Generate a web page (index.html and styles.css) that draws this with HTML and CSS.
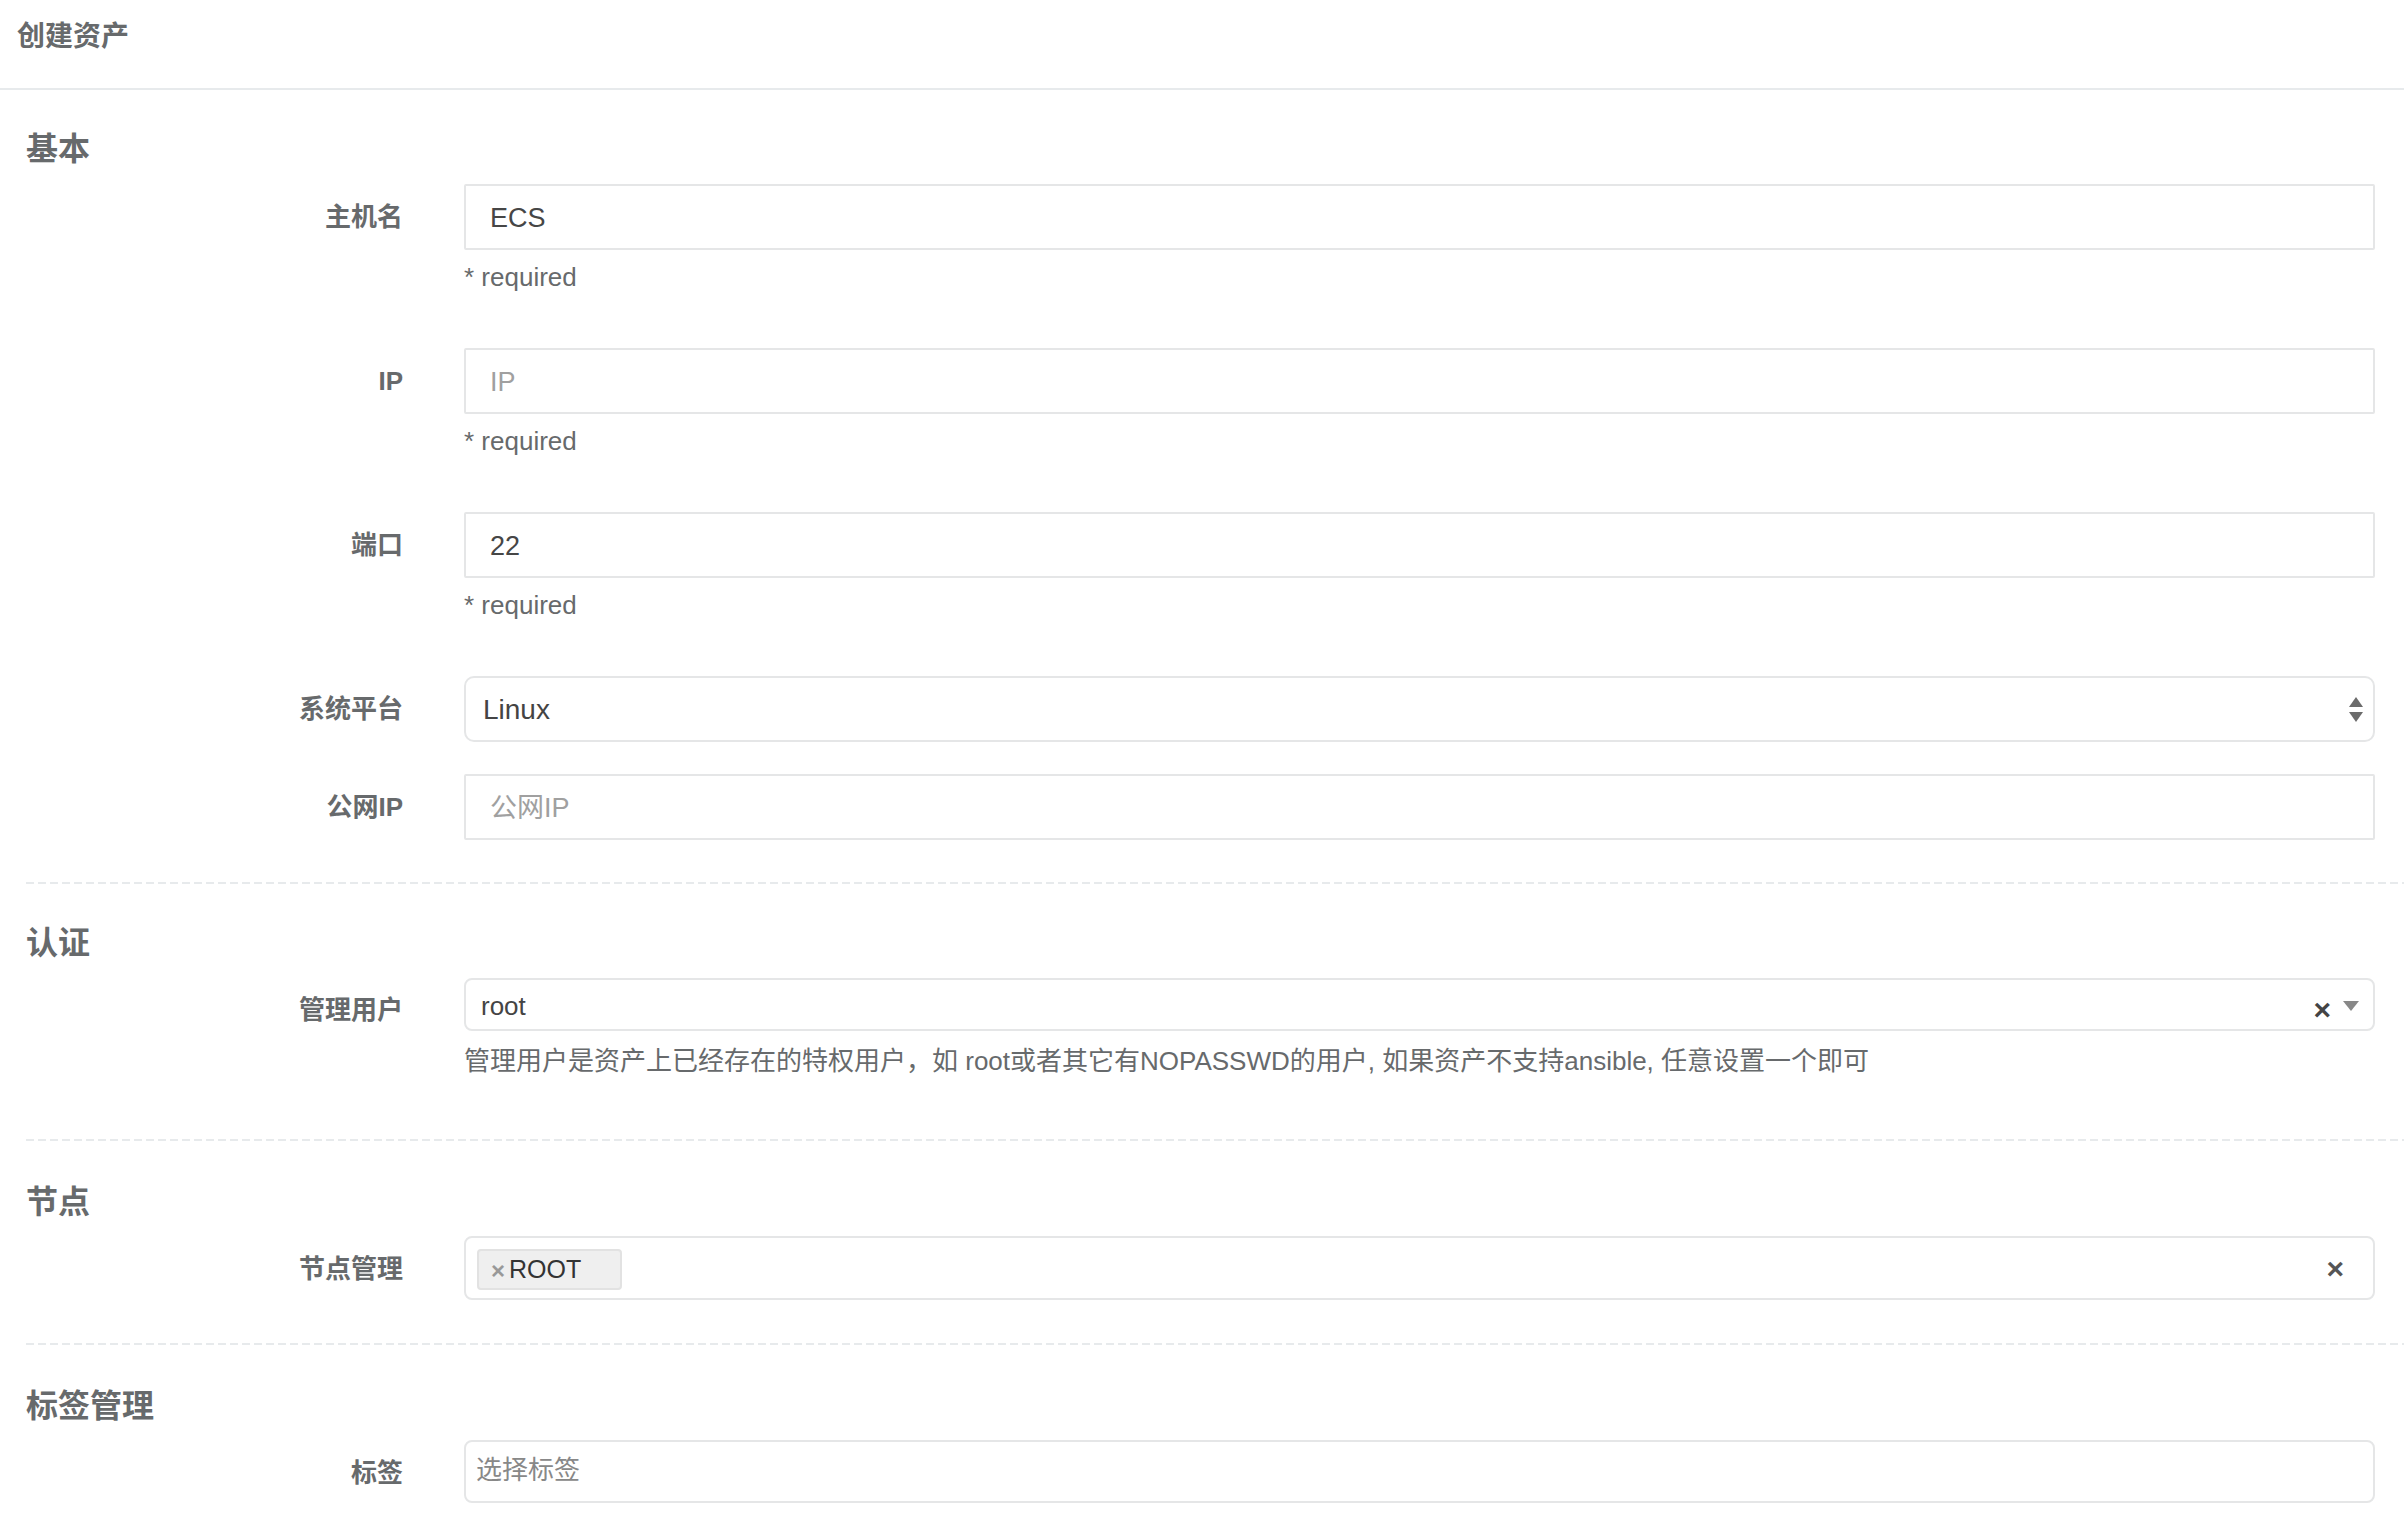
FILE: index.html
```html
<!DOCTYPE html>
<html lang="zh-CN">
<head>
<meta charset="utf-8">
<title>创建资产</title>
<link rel="stylesheet" href="styles.css">
</head>
<body>
<div class="ibox">
  <div class="ibox-title"><h5>创建资产</h5></div>
  <div class="ibox-content">
    <h3 class="section">基本</h3>
    <div class="row with-help">
      <label class="label">主机名</label>
      <div class="field">
        <input class="control" type="text" value="ECS">
        <div class="help">* required</div>
      </div>
    </div>
    <div class="row with-help">
      <label class="label">IP</label>
      <div class="field">
        <input class="control" type="text" placeholder="IP">
        <div class="help">* required</div>
      </div>
    </div>
    <div class="row with-help">
      <label class="label">端口</label>
      <div class="field">
        <input class="control" type="text" value="22">
        <div class="help">* required</div>
      </div>
    </div>
    <div class="row gap-sm">
      <label class="label">系统平台</label>
      <div class="field">
        <div class="native-select">
          <span class="sel-value">Linux</span>
          <svg class="updown" width="14" height="26" viewBox="0 0 14 26"><polygon points="0,10 7,0 14,10" fill="#6b6b6b"/><polygon points="0,15 14,15 7,25" fill="#6b6b6b"/></svg>
        </div>
      </div>
    </div>
    <div class="row">
      <label class="label">公网IP</label>
      <div class="field">
        <input class="control" type="text" placeholder="公网IP">
      </div>
    </div>

    <div class="hr-dashed"></div>

    <h3 class="section">认证</h3>
    <div class="row">
      <label class="label label-s2">管理用户</label>
      <div class="field">
        <div class="s2 s2-single">
          <span class="s2-value">root</span>
          <span class="s2-icons">
            <span class="s2-clear">×</span>
            <svg class="s2-arrow" width="16" height="10" viewBox="0 0 16 10"><polygon points="0,0 16,0 8,10" fill="#888"/></svg>
          </span>
        </div>
        <div class="help help-long">管理用户是资产上已经存在的特权用户，如 root或者其它有NOPASSWD的用户, 如果资产不支持ansible, 任意设置一个即可</div>
      </div>
    </div>

    <div class="hr-dashed hr-after-help"></div>

    <h3 class="section section-tight">节点</h3>
    <div class="row">
      <label class="label label-s2m">节点管理</label>
      <div class="field">
        <div class="s2 s2-multi">
          <span class="tag"><span class="tag-x">×</span><span class="tag-text">ROOT</span></span>
          <span class="s2-clear s2-clear-multi">×</span>
        </div>
      </div>
    </div>

    <div class="hr-dashed"></div>

    <h3 class="section section-last">标签管理</h3>
    <div class="row">
      <label class="label label-s2m">标签</label>
      <div class="field">
        <div class="s2 s2-tags">
          <span class="s2-placeholder">选择标签</span>
        </div>
      </div>
    </div>
  </div>
</div>
</body>
</html>
```

FILE: styles.css
```css
* {
  box-sizing: border-box;
}

html, body {
  margin: 0;
  padding: 0;
  background: #ffffff;
}

body {
  width: 2404px;
  min-height: 1528px;
  font-family: "Liberation Sans", "Noto Sans CJK SC", sans-serif;
  font-size: 26px;
  color: #676a6c;
}

.ibox-title {
  height: 90px;
  padding: 17px 0 0 17px;
  border-bottom: 2px solid #e7eaec;
}

.ibox-title h5 {
  margin: 0;
  font-size: 28px;
  line-height: 40px;
  font-weight: bold;
  color: #676a6c;
}

.ibox-content {
  padding: 35px 0 0 26px;
}

.section {
  margin: 0 0 13px 0;
  padding-top: 2px;
  font-size: 32px;
  line-height: 44px;
  font-weight: bold;
  color: #676a6c;
}

.section-tight {
  margin-bottom: 12px;
  padding-top: 4px;
}

.section-last {
  margin-bottom: 12px;
  padding-top: 4px;
}

.row {
  display: grid;
  grid-template-columns: 377px 1fr;
  column-gap: 61px;
  align-items: start;
  padding-right: 29px;
}

.row.with-help {
  margin-bottom: 53px;
}

.row.gap-sm {
  margin-bottom: 32px;
}

.label {
  text-align: right;
  font-weight: bold;
  font-size: 26px;
  line-height: 66px;
  color: #676a6c;
  white-space: nowrap;
}

.label-s2 {
  line-height: 53px;
  padding-top: 6px;
}

.label-s2m {
  line-height: 63px;
  padding-top: 2px;
}

.field {
  min-width: 0;
}

.control {
  display: block;
  width: 100%;
  height: 66px;
  margin: 0;
  padding: 2px 24px 0 24px;
  border: 2px solid #e5e6e7;
  border-radius: 2px;
  background: #ffffff;
  font-family: "Liberation Sans", "Noto Sans CJK SC", sans-serif;
  font-size: 27px;
  color: #464646;
  outline: none;
}

.control::placeholder {
  color: #a0a0a0;
}

.help {
  margin-top: 9px;
  line-height: 36px;
  font-size: 26px;
  color: #676a6c;
}

.help-long {
  margin-top: 12px;
  white-space: nowrap;
}

.native-select {
  display: flex;
  align-items: center;
  justify-content: space-between;
  height: 66px;
  padding: 2px 10px 0 17px;
  border: 2px solid #e5e6e7;
  border-radius: 10px;
  background: #ffffff;
}

.sel-value {
  font-size: 28px;
  color: #444444;
}

.updown {
  display: block;
}

.hr-dashed {
  height: 2px;
  margin: 42px 0 35px 0;
  background: repeating-linear-gradient(to right, #e7eaec 0 8px, transparent 8px 12px);
}

.hr-after-help {
  margin-top: 60px;
}

.s2 {
  display: flex;
  align-items: center;
  border: 2px solid #e5e6e7;
  border-radius: 8px;
  background: #ffffff;
}

.s2-single {
  height: 53px;
  justify-content: space-between;
  padding: 3px 14px 0 15px;
}

.s2-value {
  font-size: 26px;
  color: #444444;
}

.s2-icons {
  display: flex;
  align-items: center;
  gap: 12px;
}

.s2-clear {
  font-size: 30px;
  line-height: 1;
  font-weight: bold;
  color: #444444;
  margin-top: 8px;
}

.s2-arrow {
  display: block;
}

.s2-multi {
  height: 64px;
  padding: 2px 29px 0 11px;
  justify-content: space-between;
}

.tag {
  display: flex;
  align-items: center;
  width: 145px;
  height: 41px;
  padding: 0 0 0 12px;
  border: 2px solid #e2e2e2;
  border-radius: 4px;
  background: #efefef;
}

.tag-x {
  font-size: 24px;
  font-weight: bold;
  color: #999999;
  margin-right: 4px;
  margin-top: 4px;
}

.tag-text {
  font-size: 25px;
  color: #333333;
}

.s2-clear-multi {
  font-size: 30px;
  color: #555555;
  margin-top: 0;
}

.s2-tags {
  height: 63px;
  padding: 0 0 0 10px;
  align-items: flex-start;
}

.s2-placeholder {
  font-size: 26px;
  line-height: 36px;
  margin-top: 10px;
  color: #888888;
}
```
